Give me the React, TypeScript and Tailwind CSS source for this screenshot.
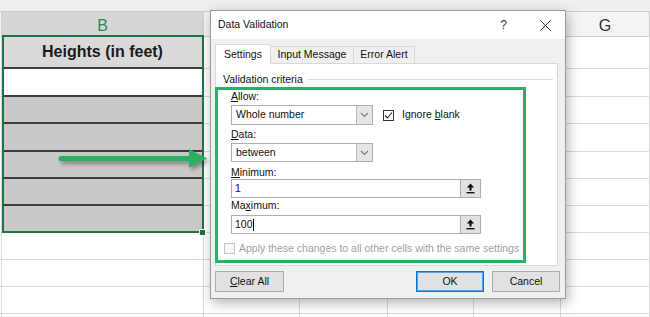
import React from 'react';

const COLS = ['w-[2px]', 'w-[202px]', 'w-[96px]', 'w-[88px]', 'w-[86px]', 'w-[87px]', 'flex-1'];
const ROWS = ['h-[32px]', 'h-[28px]', 'h-[27px]', 'h-[28px]', 'h-[27px]', 'h-[27px]', 'h-[27px]', 'h-[27px]', 'h-[27px]', 'h-[27px]', 'h-[10px]'];

function bCellClass(i: number) {
  if (i === 0) return 'bg-[#d9d9d9] border-b-2 border-b-[#34423a]';
  if (i === 1) return 'bg-white border-b-2 border-b-[#3d3d3d]';
  if (i >= 2 && i <= 5) return 'bg-[#c9c9c9] border-b-2 border-b-[#3d3d3d]';
  if (i === 6) return 'bg-[#c9c9c9]';
  return 'bg-white';
}

function UpIcon() {
  return (
    <svg width="9" height="11" viewBox="0 0 9 11">
      <path d="M4.5 0.5 L0.8 4.6 H3.4 V7.6 H5.6 V4.6 H8.2 Z" fill="#111" />
      <rect x="0.5" y="9" width="8" height="1.4" fill="#111" />
    </svg>
  );
}

function Chevron() {
  return (
    <svg width="9" height="6" viewBox="0 0 9 6">
      <polyline points="1,1 4.5,4.5 8,1" fill="none" stroke="#7a7a7a" strokeWidth="1.1" />
    </svg>
  );
}

function Select({ value }: { value: string }) {
  return (
    <div className="w-[142px] h-[20px] flex border border-[#adadad] bg-white">
      <div className="flex-1 flex items-center pl-[4px] text-[#111]">{value}</div>
      <div className="w-[16px] bg-[#e6e6e6] border-l border-[#b8b8b8] flex items-center justify-center">
        <Chevron />
      </div>
    </div>
  );
}

function NumInput({ value, caret }: { value: string; caret?: boolean }) {
  return (
    <div className="w-[250px] h-[19px] flex border border-[#adadad] bg-white">
      <div className="flex-1 flex items-center pl-[3px] text-[#111]">
        {value}
        {caret && <span className="inline-block w-px h-[12px] bg-black" />}
      </div>
      <div className="w-[20px] bg-[#e1e1e1] border-l border-[#adadad] flex items-center justify-center">
        <UpIcon />
      </div>
    </div>
  );
}

export default function App() {
  return (
    <div className="relative w-[650px] h-[317px] overflow-hidden bg-white font-['Liberation_Sans',Arial,sans-serif]">
      {/* Spreadsheet */}
      <div className="flex flex-col">
        <div className="h-[12px] bg-[#efefef] border-b border-[#cfcfcf]" />
        <div className="h-[25px] flex">
          {COLS.map((c, j) => (
            <div
              key={j}
              className={`${c} h-full border-r border-b border-[#cfcfcf] flex items-center justify-center pt-[3px] text-[16px] ${
                j === 1 ? 'bg-[#d6d6d6] text-[#2e8a55]' : 'bg-[#f4f4f4] text-[#333]'
              }`}
            >
              {j === 1 ? 'B' : j === 6 ? 'G' : ''}
            </div>
          ))}
        </div>
        {ROWS.map((h, i) => (
          <div key={i} className={`${h} flex`}>
            {COLS.map((c, j) => (
              <div
                key={j}
                className={`${c} h-full border-r border-b border-[#dadada] ${j === 1 ? bCellClass(i) : 'bg-white'} ${
                  j === 1 && i === 0 ? 'flex items-center justify-center font-bold text-[16px] text-[#1a1a1a]' : ''
                }`}
              >
                {j === 1 && i === 0 ? 'Heights (in feet)' : ''}
              </div>
            ))}
          </div>
        ))}
      </div>

      {/* selection border */}
      <div className="absolute left-[2px] top-[35px] w-[202px] h-[198px] border-2 border-[#217346]" />
      <div className="absolute left-[200px] top-[230px] w-[5px] h-[5px] bg-[#217346] outline outline-1 outline-white" />

      {/* arrow */}
      <svg className="absolute left-0 top-0 drop-shadow-[2px_3px_2px_rgba(0,0,0,0.35)]" width="220" height="180" viewBox="0 0 220 180">
        <line x1="61" y1="158.5" x2="192" y2="158.5" stroke="#2ab063" strokeWidth="5" strokeLinecap="round" />
        <polygon points="189,149 207,158.5 189,167.5" fill="#2ab063" />
      </svg>

      {/* Dialog */}
      <div className="absolute left-[210px] top-[10px] w-[356px] h-[289px] border border-[#9c9c9c] bg-[#f0f0f0] shadow-[2px_4px_12px_rgba(0,0,0,0.3)] flex flex-col text-[10.5px] text-[#111]">
        <div className="h-[28px] bg-white flex items-center pl-[7px] pr-[14px]">
          <span>Data Validation</span>
          <span className="ml-auto text-[12px] text-[#333]">?</span>
          <svg className="ml-[33px]" width="11" height="11" viewBox="0 0 11 11">
            <path d="M0.5 0.5 L10.5 10.5 M10.5 0.5 L0.5 10.5" stroke="#333" strokeWidth="1" />
          </svg>
        </div>
        <div className="flex-1 px-[4px] pt-[5px] flex flex-col">
          {/* tabs */}
          <div className="h-[20px] flex items-end -mb-px relative z-10">
            <div className="w-[56px] h-[20px] bg-white border-x border-t border-[#d9d9d9] flex items-center justify-center">
              Settings
            </div>
            <div className="w-[83px] h-[17px] mb-px bg-[#f0f0f0] border-r border-t border-[#d9d9d9] flex items-center justify-center">
              Input Message
            </div>
            <div className="w-[61px] h-[17px] mb-px bg-[#f0f0f0] border-r border-t border-[#d9d9d9] flex items-center justify-center">
              Error Alert
            </div>
          </div>
          {/* panel */}
          <div className="relative w-[343px] h-[203px] bg-white border border-[#d9d9d9] flex flex-col">
            <div className="mt-[9px] h-[12px] flex items-center pl-[7px] pr-[4px]">
              <span className="leading-[12px]">Validation criteria</span>
              <div className="flex-1 ml-[5px] h-px bg-[#dcdcdc]" />
            </div>
            <div className="pl-[15px] flex flex-col">
              <div className="mt-[5px] h-[12px] leading-[12px]">
                <span className="underline">A</span>llow:
              </div>
              <div className="mt-[3px] flex items-center">
                <Select value="Whole number" />
                <div className="ml-[10px] w-[11px] h-[11px] border border-[#333] bg-white flex items-center justify-center">
                  <svg width="9" height="9" viewBox="0 0 9 9">
                    <polyline points="1,4.5 3.5,7 8,1.5" fill="none" stroke="#222" strokeWidth="1.1" />
                  </svg>
                </div>
                <span className="ml-[8px]">
                  Ignore <span className="underline">b</span>lank
                </span>
              </div>
              <div className="mt-[3px] h-[12px] leading-[12px]">
                <span className="underline">D</span>ata:
              </div>
              <div className="mt-[3px]">
                <div className="w-[142px] h-[19px] flex border border-[#adadad] bg-white">
                  <div className="flex-1 flex items-center pl-[4px] text-[#111]">between</div>
                  <div className="w-[16px] bg-[#e6e6e6] border-l border-[#b8b8b8] flex items-center justify-center">
                    <Chevron />
                  </div>
                </div>
              </div>
              <div className="mt-[4px] h-[12px] leading-[12px]">
                <span className="underline">M</span>inimum:
              </div>
              <div className="mt-[1px]">
                <NumInput value="1" />
              </div>
              <div className="mt-[1px] h-[12px] leading-[12px]">
                Ma<span className="underline">x</span>imum:
              </div>
              <div className="mt-[4px]">
                <NumInput value="100" caret />
              </div>
            </div>
            <div className="mt-[8px] pl-[8px] h-[12px] flex items-center">
              <div className="w-[11px] h-[11px] border border-[#c4c4c4] bg-[#f8f8f8]" />
              <span className="ml-[4px] text-[#a0a0a0] leading-[12px]">
                Apply these changes to all other cells with the same settings
              </span>
            </div>
            {/* annotation box */}
            <div className="absolute left-[-1px] top-[23px] w-[311px] h-[176px] border-[3px] border-[#2ab063]" />
          </div>
          {/* buttons */}
          <div className="mt-[5px] flex pr-[1px]">
            <div className="w-[69px] h-[21px] bg-[#e1e1e1] border border-[#adadad] flex items-center justify-center">
              <span>
                <span className="underline">C</span>lear All
              </span>
            </div>
            <div className="ml-auto w-[68px] h-[21px] bg-[#e1e1e1] border border-[#0078d7] shadow-[inset_0_0_0_1px_#5aa0e6] flex items-center justify-center">
              OK
            </div>
            <div className="ml-[8px] w-[68px] h-[21px] bg-[#e1e1e1] border border-[#adadad] flex items-center justify-center">
              Cancel
            </div>
          </div>
        </div>
      </div>
    </div>
  );
}
